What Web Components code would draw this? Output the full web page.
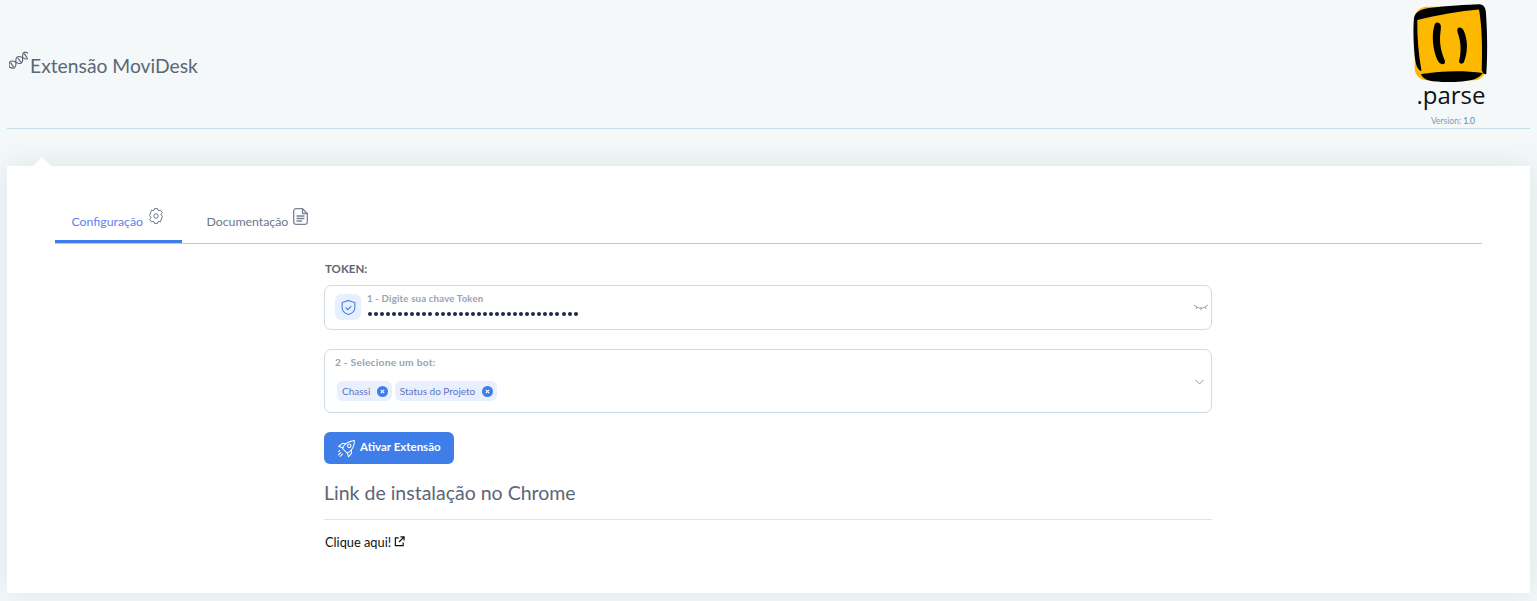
<!DOCTYPE html>
<html lang="pt">
<head>
<meta charset="utf-8">
<title>Extensão MoviDesk</title>
<style>
  html, body { margin: 0; height: 100%; }
  body {
    background: #f4f8f9;
    font-family: Lato, "Noto Sans", sans-serif;
    overflow: hidden;
  }
</style>
</head>
<body>
<app-page>
  <app-header slot="header"></app-header>
  <app-card slot="card">
    <app-tabs></app-tabs>
    <config-form></config-form>
  </app-card>
</app-page>

<script>
  // Small helper so every element builds its shadow root the same way.
  class Base extends HTMLElement {
    constructor() {
      super();
      this.attachShadow({ mode: 'open' });
      this.shadowRoot.innerHTML = this.markup();
    }
    markup() { return ''; }
  }

  class AppPage extends Base {
    markup() {
      return `
        <style>
          :host { display: block; padding: 0 7px; }
          .gap { height: 37px; }
        </style>
        <slot name="header"></slot>
        <div class="gap"></div>
        <slot name="card"></slot>`;
    }
  }

  class AppHeader extends Base {
    markup() {
      return `
        <style>
          :host {
            display: flex; justify-content: space-between; align-items: center;
            height: 128px; border-bottom: 1px solid #c2dfe8; box-sizing: content-box;
          }
          .title { display: flex; align-items: center; margin-top: 2px; font-size: 19.3px; color: #5b6678; }
          .title svg { width: 19px; height: 19px; margin: -9px 2px 0 2px; }
          .brand {
            width: 100px; margin-right: 27px; display: flex; flex-direction: column;
            align-items: center; align-self: flex-start; padding-top: 4px;
          }
          .brand svg { width: 76px; height: 79px; display: block; margin-left: -6px; }
          .name { font: 400 24px/24px "Open Sans", sans-serif; color: #111; margin: 0 0 0 -4px; }
          .ver { font-size: 8.5px; line-height: 12px; color: #8a96a6; margin-top: 8px; }
          .ver b { font-weight: 400; color: #5f87a8; }
        </style>
        <div class="title">
          <svg viewBox="0 0 21 19" fill="none" stroke="#5b6678" stroke-width="1.300">
            <g transform="rotate(-34 10.500 9.500)">
              <path d="M-2 9.500C1 4 4 4 7 9.500S13 15 16 9.500 22 4 24 9.500"/>
              <path d="M-2 9.500C1 15 4 15 7 9.500S13 4 16 9.500 22 15 24 9.500"/>
              <path d="M2 6.500v6M11.500 6.500v6M20 6.500v6"/>
            </g>
          </svg>
          <span>Extensão MoviDesk</span>
        </div>
        <div class="brand">
          <svg viewBox="0 0 76 79">
            <rect x="2.700" y="2.700" width="71" height="73.500" rx="12" fill="#fdb900"/>
            <path d="M2 14C3 8 9 5 17 4 35 2 55 .5 67 .3 72 .5 74 4 74 10 75.500 30 75.500 55 74.300 70 73 71 71 70 69.700 66 70.500 45 70 22 67 5.500 48 7 25 11 5.300 16 5 33 6.500 50 9.500 67 5 66 3.500 60 2.500 50 1.500 38 1 24 2 14Z" fill="#000"/>
            <path d="M9 70C28 67 50 66 71 69 66 75 60 76.500 50 77.500 35 78.500 24 78 17 76.500 13 75.500 10 73 9 70Z" fill="#000"/>
            <path d="M25 18.500C29 18.500 29.500 22 28.500 28 27 38 29 48 33 57 33.500 60.500 30 61 27.500 59 22 52 19 34 22 23 22.500 20 23.500 18.500 25 18.500Z" fill="#000"/>
            <path d="M47 23.500C50 23 52 26 53 30 56 39 55.500 49 52 58 50.500 60.500 47.500 60 47 57.500 49.500 47 49 38 45.500 28 45 25.500 45.500 24 47 23.500Z" fill="#000"/>
          </svg>
          <div class="name">.parse</div>
          <div class="ver">Version: <b>1.0</b></div>
        </div>`;
    }
  }

  class AppCard extends Base {
    markup() {
      return `
        <style>
          :host {
            display: block; position: relative; background: #fff;
            height: 427px; box-sizing: border-box; padding: 31px 48px 0;
            box-shadow: 0 0 30px rgba(100, 140, 150, .17);
          }
          .tip {
            position: absolute; left: 26px; top: -9px; width: 0; height: 0;
            border-left: 9px solid transparent; border-right: 9px solid transparent;
            border-bottom: 9px solid #fff;
          }
        </style>
        <div class="tip"></div>
        <slot></slot>`;
    }
  }

  class AppTabs extends Base {
    markup() {
      return `
        <style>
          :host { display: flex; height: 46px; border-bottom: 1px solid #c4c9d0; }
          .tab {
            display: flex; align-items: flex-start; height: 46px; box-sizing: border-box;
            padding: 17px 17px 0; font-size: 12.300px; color: #6c7687; line-height: 16px;
          }
          .tab.on { color: #5b7ff0; border-bottom: 3px solid #3f7de8; width: 127px; padding-left: 16.500px; }
          .tab + .tab { padding-left: 24.500px; }
          svg { margin-left: 4px; fill: none; stroke: #6c7687; }
          .gear { width: 20px; height: 20px; margin-top: -8px; stroke-width: 1.300; }
          .doc { width: 15px; height: 17px; margin: -6px 0 0 5px; stroke: #7b8494; stroke-width: 1.300; }
        </style>
        <div class="tab on">Configuração
          <svg class="gear" viewBox="0 0 24 24" stroke-linejoin="round">
            <circle cx="12" cy="12" r="3"/>
            <path d="M10 2h4l1 3 3-1 2.500 3.500-2 2.500 2 2.500L18 20l-3-1-1 3h-4l-1-3-3 1-2.500-3.500 2-2.500-2-2.500L6 4l3 1z"/>
          </svg>
        </div>
        <div class="tab">Documentação
          <svg class="doc" viewBox="0 0 15 17">
            <path d="M3 .7h6.500l4.800 4.800V14a2.300 2.300 0 0 1-2.300 2.300H3A2.300 2.300 0 0 1 .7 14V3A2.300 2.300 0 0 1 3 .7z"/>
            <path d="M9.500 .7V5.500h4.800M3.500 8h8M3.500 10.500h8M3.500 13h5.500"/>
          </svg>
        </div>`;
    }
  }

  class BotChip extends Base {
    markup() {
      return `
        <style>
          :host {
            display: inline-flex; align-items: center; height: 20px; box-sizing: border-box;
            padding: 0 3.500px 0 5px; border-radius: 6px; background: #e8f0fd;
            color: #5e72c9; font-size: 10px;
          }
          span { margin: -1px 7px 0 0; }
          svg { width: 11px; height: 11px; display: block; }
        </style>
        <span><slot></slot></span>
        <svg viewBox="0 0 11 11">
          <circle cx="5.500" cy="5.500" r="5.500" fill="#3f7de8"/>
          <path d="M3.800 3.800l3.400 3.400M7.200 3.800L3.800 7.200" stroke="#fff" stroke-width="1.100"/>
        </svg>`;
    }
  }

  class ConfigForm extends Base {
    markup() {
      return `
        <style>
          :host { display: block; width: 888px; margin: 18px 0 0 269px; }
          .lbl { font-size: 11.500px; line-height: 14px; font-weight: 700; color: #5b6678; padding-left: 1px; }
          .box {
            position: relative; box-sizing: border-box; border: 1px solid #cfdce6; border-radius: 7px;
            background: #fff;
          }
          .token { display: flex; height: 45px; margin-top: 9px; padding: 8px 10px; }
          .shield {
            width: 26px; height: 26px; border-radius: 6px; background: #e8f0fd;
            display: flex; align-items: center; justify-content: center; margin-right: 6px;
          }
          .shield svg { width: 17px; height: 17px; fill: none; stroke: #3f7de8; stroke-width: 1.500; }
          .hint { font-size: 9.600px; line-height: 10px; font-weight: 700; color: #97a3b4; letter-spacing: .2px; }
          .hint.two { font-size: 10.300px; color: #9aa3ae; }
          .dots { display: flex; gap: 2.060px; margin: 8px 0 0 1px; }
          .dots i { flex: none; width: 4px; height: 4px; border-radius: 50%; background: #1d2b46; }
          .eye { position: absolute; right: 3px; top: 18px; width: 14px; height: 6px; fill: none; stroke: #8b9bb0; stroke-width: 1; }
          .bot { height: 64px; margin-top: 19px; padding: 7px 10px; }
          .chips { display: flex; gap: 3px; margin: 14px 0 0 2px; }
          .chev { position: absolute; right: 7px; top: 29px; width: 9px; height: 6px; fill: none; stroke: #8b9bb0; stroke-width: 1; }
          button {
            display: flex; align-items: center; width: 130px; height: 32px; margin-top: 19px;
            border: 0; border-radius: 6px; background: #3f7de8; color: #fff; padding: 0 0 3px 13px;
            font: 700 11.500px Lato, sans-serif;
          }
          button svg { width: 19px; height: 19px; margin: 3px 4px 0 0; fill: none; stroke: #fff; stroke-width: 1.300; }
          h2 { margin: 17px 0 0; font-size: 19.500px; line-height: 23px; font-weight: 400; color: #5b6678; }
          hr { margin: 15px 0 0; border: 0; border-top: 1px solid #e2e4e7; }
          .link { display: flex; align-items: center; margin-top: 15px; padding-left: 1px; font-size: 12.800px; line-height: 15px; color: #111; }
          .link svg { width: 11px; height: 11px; margin: -3px 0 0 3px; fill: none; stroke: #111; stroke-width: 1.300; }
        </style>
        <div class="lbl">TOKEN:</div>
        <div class="box token">
          <div class="shield">
            <svg viewBox="0 0 24 24"><path d="M12 2l9 3v7c0 5-4 8.500-9 10-5-1.500-9-5-9-10V5z"/><path d="M8 12l3 3 5-5"/></svg>
          </div>
          <div>
            <div class="hint">1 - Digite sua chave Token</div>
            <div class="dots">${'<i></i>'.repeat(35)}</div>
          </div>
          <svg class="eye" viewBox="0 0 14 6"><path d="M0 1l2 1.500c3 2 7 2 10 0L14 1M7 4v2M3 3L2 5M11 3l1 2"/></svg>
        </div>
        <div class="box bot">
          <div class="hint two">2 - Selecione um bot:</div>
          <div class="chips">
            <bot-chip>Chassi</bot-chip>
            <bot-chip>Status do Projeto</bot-chip>
          </div>
          <svg class="chev" viewBox="0 0 9 6"><path d="M.5 1l4 4 4-4"/></svg>
        </div>
        <button>
          <svg viewBox="0 0 24 24" stroke-linejoin="round" stroke-linecap="round">
            <path d="M7 12C9 6 14 3 22 2c0 8-3 13-9 16z"/>
            <circle cx="15.500" cy="8.500" r="2.200"/>
            <path d="M7.500 11L2 9.500l5-4 4 .5M13 17.500l1.500 5 4-5-.5-4M5 17l-3 3M7 19l-3 3M3.500 14.500L2 16"/>
          </svg>
          Ativar Extensão
        </button>
        <h2>Link de instalação no Chrome</h2>
        <hr>
        <div class="link">Clique aqui!
          <svg viewBox="0 0 12 12"><path d="M5 2H1.500v8.500H10V7M7 1h4v4M11 1L5.500 6.500"/></svg>
        </div>`;
    }
  }

  customElements.define('app-page', AppPage);
  customElements.define('app-header', AppHeader);
  customElements.define('app-card', AppCard);
  customElements.define('app-tabs', AppTabs);
  customElements.define('bot-chip', BotChip);
  customElements.define('config-form', ConfigForm);
</script>
</body>
</html>
